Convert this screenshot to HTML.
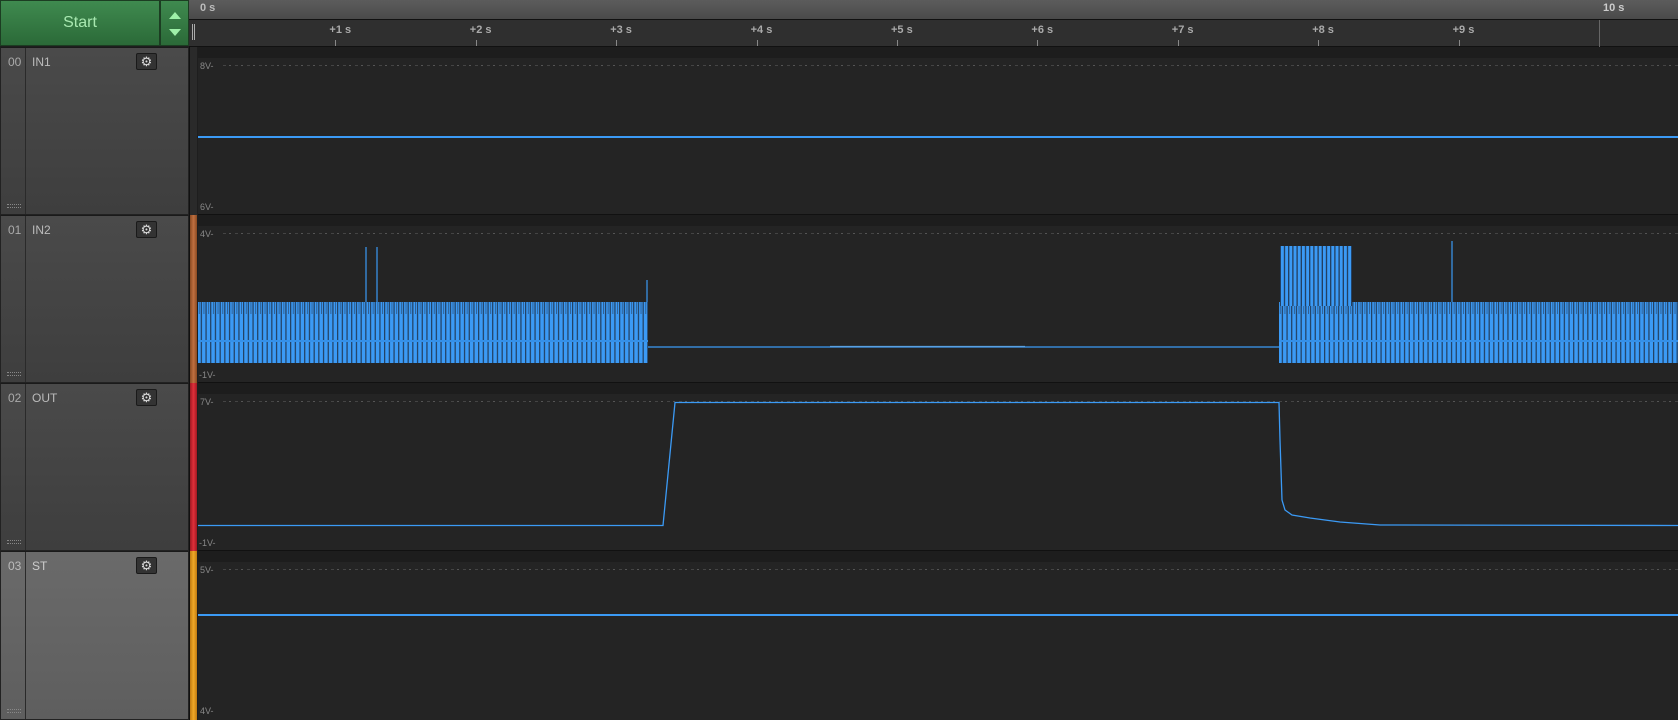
<!DOCTYPE html>
<html><head><style>
*{margin:0;padding:0;box-sizing:border-box}
body{width:1678px;height:720px;background:#1e1e1e;overflow:hidden;position:relative;font-family:"Liberation Sans",sans-serif}
.abs{position:absolute}
.start{left:0;top:0;width:160px;height:46px;background:linear-gradient(#3f8a4f,#2b6a38);border:1px solid #1c3d22;color:#a8e8b0;font-size:16px;text-align:center;line-height:44px}
.arr{left:160px;top:0;width:29px;height:46px;background:linear-gradient(#3f8a4f,#2b6a38);border:1px solid #1c3d22}
.ch{left:0;width:189px;height:168px;border:1px solid #222;border-top:1px solid #1a1a1a}
.num{position:absolute;left:0;top:0;width:25px;height:100%;border-right:1px solid #2a2a2a;color:#aaa;font-size:12px;padding:7px 0 0 7px}
.nm{position:absolute;left:31px;top:7px;color:#bbb;font-size:12px}
.gear{position:absolute;left:135px;top:5px;width:21px;height:17px;background:#333;border:1px solid #1a1a1a;border-radius:2px;color:#ddd;font-size:13px;line-height:15px;text-align:center}
.grip{position:absolute;left:6px;bottom:6px;width:14px;height:4px;border-top:1px dotted #888;border-bottom:1px dotted #888}
.bar{left:190px;width:7px;height:168px}
.tk{position:absolute;top:24px;color:#aaa;font-size:11px;font-weight:bold}
</style></head><body>
<div class="abs start">Start</div>
<div class="abs arr"><svg width="29" height="46"><path d="M8 18 L14 11 L20 18Z M8 28 L20 28 L14 35Z" fill="#9ef0a8"/></svg></div>
<div class="abs" style="left:189px;top:0;width:1489px;height:20px;background:linear-gradient(#5c5c5c,#4a4a4a);border-bottom:1px solid #111"></div>
<div class="abs" style="left:200px;top:2px;color:#bbb;font-size:11px;font-weight:bold">0 s</div>
<div class="abs" style="left:1603px;top:2px;color:#ccc;font-size:11px;font-weight:bold">10 s</div>
<div class="abs" style="left:189px;top:20px;width:1489px;height:27px;background:#2f2f2f;border-bottom:1px solid #111"></div>
<div class="abs" style="left:1599px;top:20px;width:1px;height:27px;background:#666"></div>
<div class="abs" style="left:192px;top:24px;width:3px;height:16px;border-left:1px solid #aaa;border-right:1px solid #aaa"></div>
<div id="ticks"></div>

<div class="abs ch" style="top:47px;background:linear-gradient(#4a4a4a,#3e3e3e)"><div class="num">00</div><div class="nm">IN1</div><div class="gear">⚙</div><div class="grip"></div></div>
<div class="abs ch" style="top:215px;background:linear-gradient(#4a4a4a,#3e3e3e)"><div class="num">01</div><div class="nm">IN2</div><div class="gear">⚙</div><div class="grip"></div></div>
<div class="abs ch" style="top:383px;background:linear-gradient(#4a4a4a,#3e3e3e)"><div class="num">02</div><div class="nm">OUT</div><div class="gear">⚙</div><div class="grip"></div></div>
<div class="abs ch" style="top:551px;height:169px;background:linear-gradient(#6a6a6a,#5e5e5e)"><div class="num" style="color:#bbb">03</div><div class="nm" style="color:#ccc">ST</div><div class="gear">⚙</div><div class="grip"></div></div>

<div class="abs bar" style="top:47px;background:#2a2a2a"></div>
<div class="abs bar" style="top:215px;background:linear-gradient(90deg,#8a4a22,#c07040,#8a4a22)"></div>
<div class="abs bar" style="top:383px;background:linear-gradient(90deg,#a01822,#e0303a,#a01822)"></div>
<div class="abs bar" style="top:551px;height:169px;background:linear-gradient(90deg,#c07a10,#f0a828,#c07a10)"></div>

<svg class="abs" style="left:0;top:0" width="1678" height="720">
<defs>
<pattern id="dots" width="12" height="4" patternUnits="userSpaceOnUse"><rect x="1" y="1" width="2" height="1" fill="#555"/><rect x="7" y="1" width="3" height="1" fill="#444"/></pattern>
<pattern id="pw" width="4.7" height="61" patternUnits="userSpaceOnUse" y="302"><rect width="4.7" height="61" fill="#3b9af5"/><rect x="3.4" y="0" width="1.1" height="61" fill="#1f3550"/><rect x="1.5" y="0" width="0.7" height="12" fill="#2a4a70"/><rect x="0" y="38" width="4.7" height="2" fill="#3590e8"/></pattern>
<pattern id="pt" width="4.2" height="60" patternUnits="userSpaceOnUse" y="246"><rect width="4.2" height="60" fill="#3b9af5"/><rect x="2.9" y="0" width="1.2" height="60" fill="#1f3550"/></pattern>
</defs>
<g fill="#242424">
<rect x="198" y="58" width="1480" height="156"/>
<rect x="198" y="226" width="1480" height="156"/>
<rect x="198" y="394" width="1480" height="156"/>
<rect x="198" y="562" width="1480" height="158"/>
</g>
<g fill="#1d1d1d">
<rect x="198" y="47" width="1480" height="11"/><rect x="198" y="215" width="1480" height="11"/><rect x="198" y="383" width="1480" height="11"/><rect x="198" y="551" width="1480" height="11"/>
</g>
<g stroke="#111"><line x1="198" y1="214.5" x2="1678" y2="214.5"/><line x1="198" y1="382.5" x2="1678" y2="382.5"/><line x1="198" y1="550.5" x2="1678" y2="550.5"/></g>
<g fill="url(#dots)">
<rect x="222" y="65" width="1456" height="3"/><rect x="222" y="206" width="1456" height="3"/>
<rect x="222" y="233" width="1456" height="3"/><rect x="225" y="374" width="1453" height="3"/>
<rect x="222" y="401" width="1456" height="3"/><rect x="225" y="542" width="1453" height="3"/>
<rect x="222" y="569" width="1456" height="3"/><rect x="222" y="710" width="1456" height="3"/>
</g>
<g font-family="Liberation Sans" font-size="9" fill="#888">
<text x="200" y="69">8V-</text><text x="200" y="210">6V-</text>
<text x="200" y="237">4V-</text><text x="199" y="378">-1V-</text>
<text x="200" y="405">7V-</text><text x="199" y="546">-1V-</text>
<text x="200" y="573">5V-</text><text x="200" y="714">4V-</text>
</g>
<rect x="198" y="136" width="1480" height="2" fill="#3b9af5"/>
<rect x="198" y="614" width="1480" height="2" fill="#3b9af5"/>
<!-- IN2 -->
<rect x="198" y="302" width="450" height="61" fill="url(#pw)"/>
<rect x="1279" y="302" width="399" height="61" fill="url(#pw)"/>
<rect x="1280" y="246" width="72" height="60" fill="url(#pt)"/>
<g stroke="#3b9af5" stroke-width="1.2" fill="none">
<line x1="366" y1="247" x2="366" y2="302"/><line x1="377" y1="247" x2="377" y2="302"/>
<line x1="647" y1="280" x2="647" y2="302"/><line x1="1452" y1="241" x2="1452" y2="302"/>
<line x1="648" y1="347" x2="1279" y2="347"/>
<line x1="830" y1="346.5" x2="1025" y2="346.5" stroke="#5aa0e0"/>
</g>
<!-- OUT -->
<path d="M198 525.5 L663 525.5 L675 402.5 L1279 402.5 L1280 440 L1282 500 L1285 510 L1292 515 L1310 518 L1340 522 L1380 525 L1678 525.5" stroke="#3b9af5" stroke-width="1.3" fill="none"/>
</svg>
<div class="abs" style="left:189px;top:47px;width:1px;height:673px;background:#111"></div>
<script>
var h='';for(var k=1;k<=9;k++){var x=195+140.4*k;h+='<div class="tk" style="left:'+(x-6)+'px">+'+k+' s</div><div class="abs" style="left:'+Math.round(x)+'px;top:40px;width:1px;height:6px;background:#888"></div>';}
document.getElementById('ticks').innerHTML=h;
</script>
</body></html>
